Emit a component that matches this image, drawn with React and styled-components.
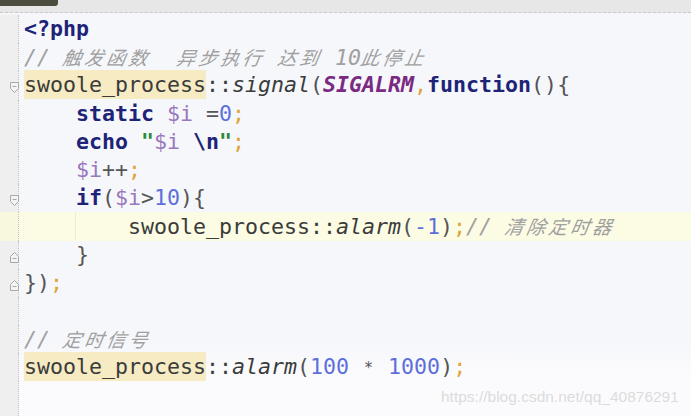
import React from 'react'
import styled, {createGlobalStyle} from 'styled-components'

const GlobalStyle = createGlobalStyle`
    html, body {
        margin: 0;
        padding: 0;
        background: #fbfbfd;
    }
    #root {
        height: 416px;
    }
`;

const Page = styled.div`
    position: relative;
    width: 691px;
    height: 416px;
    display: flex;
    flex-direction: column;
    overflow: hidden;
    background: #f6f7fb;
`;

const TopBar = styled.div`
    height: 12px;
    flex: 0 0 12px;
    background: #e7e7e7;
    border-bottom: 1px dashed #c9c9c9;
    display: flex;
    align-items: flex-start;
`;

const Tab = styled.div`
    width: 58px;
    height: 6px;
    background: #4d4d3f;
    border-bottom-right-radius: 3px;
`;

const Editor = styled.div`
    flex: 1;
    display: flex;
    flex-direction: column;
    padding-top: 2px;
    background: linear-gradient(#f6f7fb 0, #f6f7fb 330px, #fbfbfd 360px);
`;

const Row = styled.div`
    display: flex;
    height: 28.2px;
    background: ${props => props.active ? "#fcfce4" : "transparent"};
`;

const Filler = styled(Row)`
    flex: 1;
    height: auto;
`;

const GutterCell = styled.div`
    position: relative;
    width: 18px;
    flex: 0 0 18px;
    background: ${props => props.active ? "#f8f8de" : "#efefef"};
    border-right: 1px dotted #c4c4c4;
`;

const FoldMark = styled.svg`
    position: absolute;
    left: 10px;
    top: 11px;
`;

const CodeCell = styled.div`
    flex: 1;
    padding-left: 5px;
    font-family: "DejaVu Sans Mono", "Noto Sans CJK SC", monospace;
    font-size: 21.6px;
    line-height: 28.2px;
    color: #3b3b3b;
    white-space: pre;
`;

const Indent = styled.span`
    display: inline-block;
    vertical-align: top;
    width: ${props => props.n * 13}px;
    height: 28px;
    box-sizing: border-box;
    border-right: ${props => props.guide ? "1px solid #ebebd6" : "none"};
`;

const Kw = styled.span`
    color: #1d2478;
    font-weight: 700;
`;
const Var = styled.span`
    color: #9a78bd;
`;
const Num = styled.span`
    color: #5d6fdc;
`;
const Semi = styled.span`
    color: #e0a43c;
`;
const Str = styled.span`
    color: #2f8a33;
    font-weight: 700;
`;
const Esc = styled.span`
    color: #1d2478;
    font-weight: 700;
`;
const Const = styled.span`
    color: #7a2a82;
    font-weight: 700;
    font-style: italic;
`;
const Method = styled.span`
    font-style: italic;
`;
const Punct = styled.span`
    color: #555;
`;
const Star = styled.span`
    display: inline-block;
    width: 13px;
    text-align: center;
    font-size: 15px;
    vertical-align: 1px;
    color: #555;
`;
const Comment = styled.span`
    color: #a0a0a0;
    font-style: italic;
`;
const Cjk = styled.span`
    font-family: "Noto Sans CJK SC", sans-serif;
    font-size: 19px;
    font-style: italic;
    display: inline-block;
    width: ${props => props.w}px;
    transform: skewX(-10deg);
    letter-spacing: 3px;
`;
const Hl = styled.span`
    background: #f6ebc3;
    padding: 2px 0;
`;

const Watermark = styled.div`
    position: absolute;
    left: 441px;
    top: 388px;
    font-family: "Liberation Sans", Arial, sans-serif;
    font-size: 15.5px;
    color: #dcdcdc;
`;

const FoldOpen = () => (
    <FoldMark width="9" height="11" viewBox="0 0 9 11">
        <path d="M0.5 0.5 H8.5 V6.5 L4.5 10.5 L0.5 6.5 Z" fill="#f4f4f4" stroke="#a8a8a8" strokeWidth="1"/>
        <path d="M2.5 4.5 H6.5" stroke="#a8a8a8" strokeWidth="1"/>
    </FoldMark>
)

const FoldClose = () => (
    <FoldMark width="9" height="11" viewBox="0 0 9 11">
        <path d="M0.5 10.5 H8.5 V4.5 L4.5 0.5 L0.5 4.5 Z" fill="#f4f4f4" stroke="#a8a8a8" strokeWidth="1"/>
        <path d="M2.5 6.5 H6.5" stroke="#a8a8a8" strokeWidth="1"/>
    </FoldMark>
)

const Line = ({fold, active, children}) => (
    <Row active={active}>
        <GutterCell active={active}>
            {fold === 'open' && <FoldOpen/>}
            {fold === 'close' && <FoldClose/>}
        </GutterCell>
        <CodeCell>{children}</CodeCell>
    </Row>
)

const Swoole = () => <Hl>swoole_process</Hl>

export default function App() {
    return (
        <Page>
            <GlobalStyle/>
            <TopBar><Tab/></TopBar>
            <Editor>
                <Line><Kw>&lt;?php</Kw></Line>
                <Line><Comment>{"// "}<Cjk w={88}>触发函数</Cjk>{"  "}<Cjk w={88}>异步执行</Cjk>{" "}<Cjk w={44}>达到</Cjk>{" 10"}<Cjk w={88}>此停止</Cjk></Comment></Line>
                <Line fold="open"><Swoole/>::<Method>signal</Method><Punct>(</Punct><Const>SIGALRM</Const><Semi>,</Semi><Kw>function</Kw><Punct>(){"{"}</Punct></Line>
                <Line><Indent n={4}/><Kw>static</Kw>{" "}<Var>$i</Var>{" "}<Punct>=</Punct><Num>0</Num><Semi>;</Semi></Line>
                <Line><Indent n={4}/><Kw>echo</Kw>{" "}<Str>"</Str><Var>$i</Var>{" "}<Esc>\n</Esc><Str>"</Str><Semi>;</Semi></Line>
                <Line><Indent n={4}/><Var>$i</Var><Punct>++</Punct><Semi>;</Semi></Line>
                <Line fold="open"><Indent n={4}/><Kw>if</Kw><Punct>(</Punct><Var>$i</Var><Punct>&gt;</Punct><Num>10</Num><Punct>){"{"}</Punct></Line>
                <Line active><Indent n={4} guide/><Indent n={4}/>swoole_process::<Method>alarm</Method><Punct>(</Punct><Num>-1</Num><Punct>)</Punct><Semi>;</Semi><Comment>{"// "}<Cjk w={110}>清除定时器</Cjk></Comment></Line>
                <Line fold="close"><Indent n={4}/><Punct>{"}"}</Punct></Line>
                <Line fold="close"><Punct>{"})"}</Punct><Semi>;</Semi></Line>
                <Line/>
                <Line><Comment>{"// "}<Cjk w={88}>定时信号</Cjk></Comment></Line>
                <Line><Swoole/>::<Method>alarm</Method><Punct>(</Punct><Num>100</Num>{" "}<Star>*</Star>{" "}<Num>1000</Num><Punct>)</Punct><Semi>;</Semi></Line>
                <Filler><GutterCell/></Filler>
            </Editor>
            <Watermark>https://blog.csdn.net/qq_40876291</Watermark>
        </Page>
    )
}
